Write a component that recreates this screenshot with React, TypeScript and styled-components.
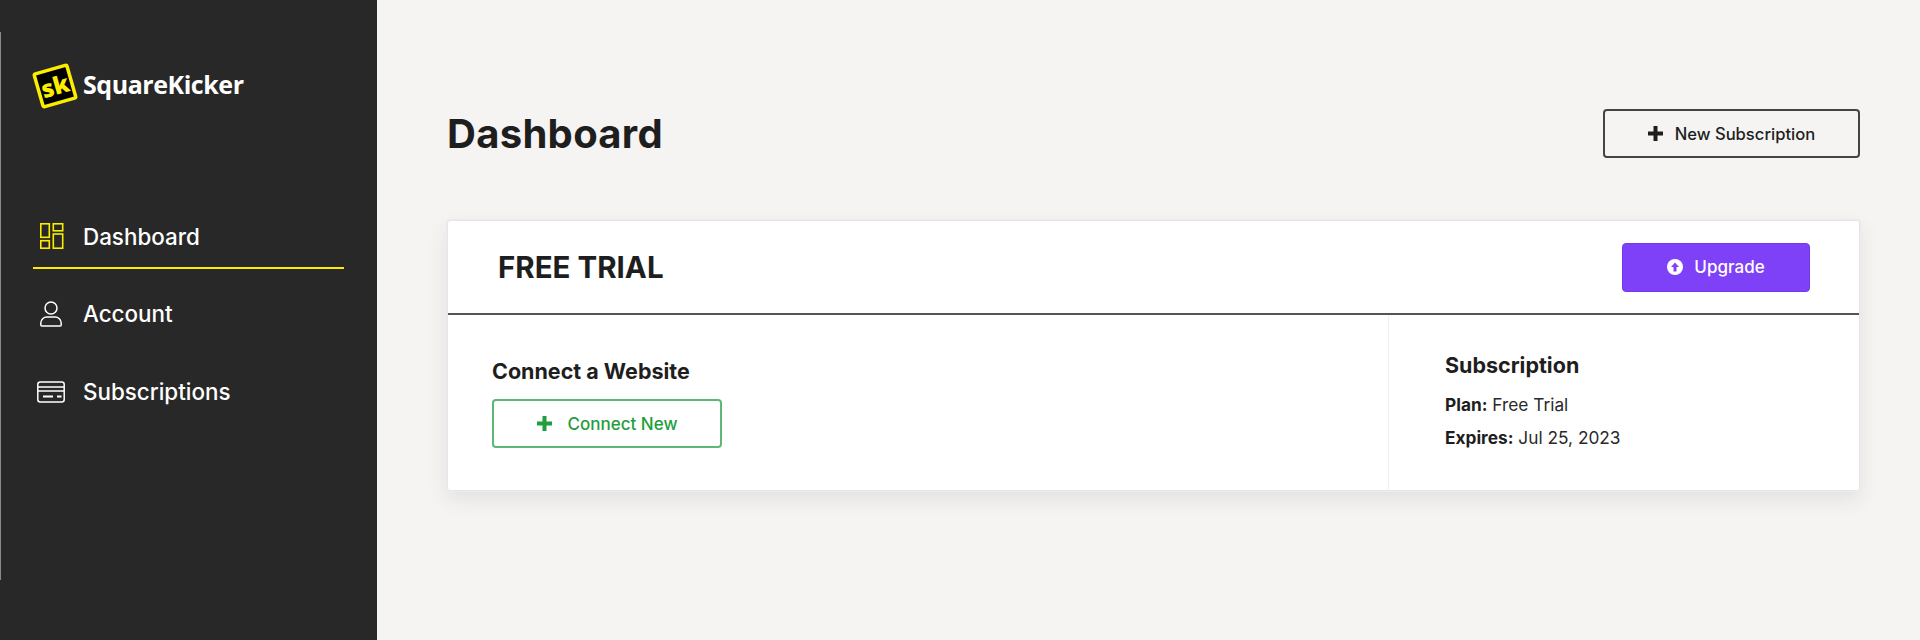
import React from "react";
import styled, { createGlobalStyle } from "styled-components";

const GlobalStyle = createGlobalStyle`
  html, body {
    margin: 0;
    padding: 0;
    background: #f5f4f2;
  }
  * {
    box-sizing: border-box;
  }
`;

const Page = styled.div`
  display: flex;
  width: 1920px;
  height: 640px;
  overflow: hidden;
  font-family: Inter, "Liberation Sans", sans-serif;
  color: #1e1e1e;
`;

const Sidebar = styled.aside`
  position: relative;
  flex: 0 0 377px;
  padding: 61px 33px 0 33px;
  background: #282828;

  &::before {
    content: "";
    position: absolute;
    left: 0;
    top: 32px;
    bottom: 60px;
    width: 1px;
    background: #8a8a8a;
  }
`;

const Brand = styled.div`
  display: flex;
  align-items: center;
  gap: 4px;
  height: 46px;
  margin-left: -2px;
  svg {
    margin-top: 3px;
  }
`;

const BrandName = styled.span`
  font-family: "Open Sans", sans-serif;
  font-weight: 700;
  font-size: 25px;
  letter-spacing: -0.45px;
  line-height: 44px;
  color: #fff;
`;

const Menu = styled.nav`
  display: flex;
  flex-direction: column;
  margin-top: 100px;
`;

const MenuItem = styled.a<{ $active?: boolean }>`
  display: flex;
  align-items: center;
  gap: 18px;
  height: 62px;
  padding: 0 0 2px 4px;
  margin-bottom: 15.5px;
  font-size: 22.4px;
  font-weight: 500;
  color: #fff;
  border-bottom: 2px solid ${({ $active }) => ($active ? "#fbec00" : "transparent")};
  svg {
    flex: 0 0 28px;
    color: ${({ $active }) => ($active ? "#fbec00" : "#fff")};
  }
`;

const Main = styled.main`
  flex: 1;
  padding: 109px 60px 0 70px;
`;

const TopRow = styled.header`
  display: flex;
  justify-content: space-between;
  align-items: center;
  height: 49px;
  margin-bottom: 62px;
`;

const Title = styled.h1`
  margin: 0;
  font-size: 40px;
  font-weight: 700;
  letter-spacing: 0.3px;
`;

const Button = styled.button<{ $kind: "outline" | "primary" | "green" }>`
  display: flex;
  align-items: center;
  justify-content: center;
  gap: ${({ $kind }) => ($kind === "outline" ? "12px" : $kind === "primary" ? "11px" : "16px")};
  height: 49px;
  padding: 0;
  border-radius: 4px;
  font-family: inherit;
  font-size: ${({ $kind }) => ($kind === "outline" ? "16.6px" : "17px")};
  font-weight: 500;
  cursor: pointer;
  width: ${({ $kind }) => ($kind === "outline" ? "257px" : $kind === "primary" ? "188px" : "230px")};
  background: ${({ $kind }) =>
    $kind === "outline" ? "transparent" : $kind === "primary" ? "#7f41f8" : "#fff"};
  color: ${({ $kind }) =>
    $kind === "outline" ? "#1e1e1e" : $kind === "primary" ? "#fff" : "#1f9e3e"};
  border: ${({ $kind }) =>
    $kind === "outline"
      ? "2px solid #444"
      : $kind === "primary"
        ? "1px solid #7438e8"
        : "2px solid #5bb975"};
`;

const Card = styled.section`
  height: 271px;
  background: #fff;
  border: 1px solid #e6e6ea;
  border-radius: 3px;
  box-shadow: 0 0 0 1px #ececee, 0 8px 20px rgba(60, 60, 80, 0.1);
`;

const CardHeader = styled.div`
  display: flex;
  align-items: center;
  justify-content: space-between;
  height: 94px;
  padding: 0 49px 0 50px;
  border-bottom: 2px solid #555;
`;

const PlanName = styled.h2`
  margin: 0;
  font-size: 29.5px;
  font-weight: 700;
`;

const CardBody = styled.div`
  display: flex;
  height: 175px;
`;

const ConnectColumn = styled.div`
  flex: 0 0 941px;
  padding: 43px 0 0 44px;
  border-right: 1px solid #f0f0f3;
`;

const DetailsColumn = styled.div`
  flex: 1;
  padding: 37px 0 0 56px;
`;

const SectionTitle = styled.h3`
  margin: 0 0 15px;
  font-size: 21.5px;
  line-height: 26px;
  font-weight: 700;
`;

const Detail = styled.p`
  margin: 0 0 9px;
  font-size: 17.3px;
  line-height: 24px;
  color: #2a2a2a;
  b {
    font-weight: 700;
    color: #1e1e1e;
  }
`;

const PlusIcon = () => (
  <svg width="15" height="15" viewBox="0 0 15 15" fill="currentColor">
    <path d="M5.500 0h4v5.500H15v4H9.500V15h-4V9.500H0v-4h5.500z" />
  </svg>
);

const UpgradeIcon = () => (
  <svg width="16" height="16" viewBox="0 0 16 16">
    <circle cx="8" cy="8" r="8" fill="#fff" />
    <path d="M8 3.500 12 8H9.500v4.500h-3V8H4z" fill="#7f41f8" />
  </svg>
);

const LogoMark = () => (
  <svg width="48" height="48" viewBox="0 0 48 48">
    <g transform="rotate(-16 24 24)">
      <rect x="7" y="7" width="34" height="34" rx="1.500" fill="#000" stroke="#fbec00" strokeWidth="3.500" />
      <text
        x="24"
        y="33"
        textAnchor="middle"
        fontFamily="'Open Sans', sans-serif"
        fontWeight="800"
        fontSize="24"
        fill="#fbec00"
      >
        sk
      </text>
    </g>
  </svg>
);

const DashboardIcon = () => (
  <svg width="28" height="26" viewBox="0 0 28 26" fill="none" stroke="currentColor" strokeWidth="1.600">
    <rect x="3.800" y="0.800" width="8.500" height="13.500" />
    <rect x="16.300" y="0.800" width="9.400" height="7" />
    <rect x="3.800" y="17.700" width="8.500" height="7.500" />
    <rect x="16.300" y="11" width="9.400" height="14.200" />
  </svg>
);

const AccountIcon = () => (
  <svg width="28" height="26" viewBox="0 0 28 26" fill="none" stroke="currentColor" strokeWidth="1.500">
    <circle cx="14" cy="7" r="6" />
    <path d="M3.800 24v-2c0-3.500 3-6 6-6h8.400c3 0 6 2.500 6 6v2c0 .6-.4 1-1 1H4.800c-.6 0-1-.4-1-1z" />
  </svg>
);

const CardIcon = () => (
  <svg width="28" height="26" viewBox="0 0 28 26" fill="none" stroke="currentColor" strokeWidth="1.500">
    <rect x="0.800" y="4" width="26.400" height="20" rx="2.500" />
    <path d="M1 9h26M1 13h26" />
    <path d="M6 18.500h10M20 18.500h4.500" strokeWidth="2" />
  </svg>
);

export default function App() {
  return (
    <Page>
      <GlobalStyle />
      <Sidebar>
        <Brand>
          <LogoMark />
          <BrandName>SquareKicker</BrandName>
        </Brand>
        <Menu>
          <MenuItem $active>
            <DashboardIcon />
            Dashboard
          </MenuItem>
          <MenuItem>
            <AccountIcon />
            Account
          </MenuItem>
          <MenuItem>
            <CardIcon />
            Subscriptions
          </MenuItem>
        </Menu>
      </Sidebar>
      <Main>
        <TopRow>
          <Title>Dashboard</Title>
          <Button $kind="outline">
            <PlusIcon />
            New Subscription
          </Button>
        </TopRow>
        <Card>
          <CardHeader>
            <PlanName>FREE TRIAL</PlanName>
            <Button $kind="primary">
              <UpgradeIcon />
              Upgrade
            </Button>
          </CardHeader>
          <CardBody>
            <ConnectColumn>
              <SectionTitle>Connect a Website</SectionTitle>
              <Button $kind="green">
                <PlusIcon />
                Connect New
              </Button>
            </ConnectColumn>
            <DetailsColumn>
              <SectionTitle>Subscription</SectionTitle>
              <Detail>
                <b>Plan:</b> Free Trial
              </Detail>
              <Detail>
                <b>Expires:</b> Jul 25, 2023
              </Detail>
            </DetailsColumn>
          </CardBody>
        </Card>
      </Main>
    </Page>
  );
}
